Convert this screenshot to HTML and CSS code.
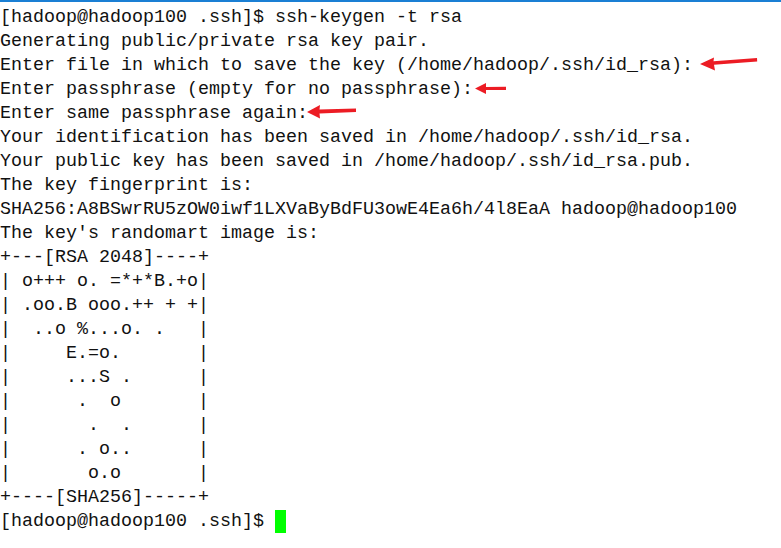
FILE: index.html
```html
<!DOCTYPE html>
<html>
<head>
<meta charset="utf-8">
<link rel="stylesheet" href="styles.css">
</head>
<body>
<div class="term">
<pre class="out">[hadoop@hadoop100 .ssh]$ ssh-keygen -t rsa
Generating public/private rsa key pair.
Enter file in which to save the key (/home/hadoop/.ssh/id_rsa):
Enter passphrase (empty for no passphrase):
Enter same passphrase again:
Your identification has been saved in /home/hadoop/.ssh/id_rsa.
Your public key has been saved in /home/hadoop/.ssh/id_rsa.pub.
The key fingerprint is:
SHA256:A8BSwrRU5zOW0iwf1LXVaByBdFU3owE4Ea6h/4l8EaA hadoop@hadoop100
The key's randomart image is:
+---[RSA 2048]----+
| o+++ o. =*+*B.+o|
| .oo.B ooo.++ + +|
|  ..o %...o. .   |
|     E.=o.       |
|     ...S .      |
|      .  o       |
|       .  .      |
|      . o..      |
|       o.o       |
+----[SHA256]-----+
[hadoop@hadoop100 .ssh]$ <span class="cursor"> </span></pre>
<svg class="arrows" width="781" height="548" viewBox="0 0 781 548">
  <g fill="#ec1c24">
    <polygon points="700,64 714,57.5 713.5,61.2 757,58 757.2,61.5 714,64.8 715,70.5"/>
    <polygon points="475,88.5 486,83 486,87 506,86.8 506,90 486,90 486,94"/>
    <polygon points="307,112 320,105 319.5,109.5 356,108.5 356,112 319.5,113.5 320,118.5"/>
  </g>
</svg>
</div>
</body>
</html>
```

FILE: styles.css
```css
html, body {
  margin: 0;
  padding: 0;
  background: #ffffff;
}
.term {
  position: relative;
  width: 781px;
  height: 548px;
  border-top: 2px solid #1a7fd4;
  box-sizing: border-box;
  overflow: hidden;
}
.out {
  margin: 0;
  padding: 4px 0 0 0;
  font-family: "Liberation Mono", monospace;
  font-size: 18.33px;
  line-height: 24px;
  color: #111111;
}
.cursor {
  display: inline-block;
  width: 11px;
  height: 23px;
  background: #00ff00;
  vertical-align: top;
}
.arrows {
  position: absolute;
  left: 0;
  top: -2px;
}
```
